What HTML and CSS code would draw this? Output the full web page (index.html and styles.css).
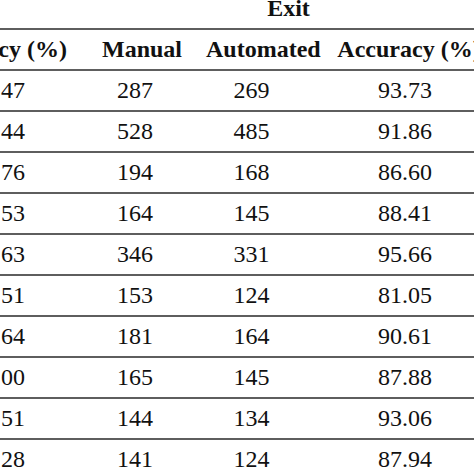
FILE: index.html
```html
<!DOCTYPE html>
<html lang="en">
<head>
<meta charset="utf-8">
<link rel="stylesheet" href="styles.css">
</head>
<body>
<div class="frame">
  <table class="results">
    <colgroup>
      <col class="c-prev">
      <col class="c-manual">
      <col class="c-auto">
      <col class="c-acc">
    </colgroup>
    <thead>
      <tr class="group-row">
        <th></th>
        <th colspan="3" class="group">Exit</th>
      </tr>
      <tr class="head-row">
        <th class="prev-head"><div class="clip-right">Accuracy (%)</div></th>
        <th class="head">Manual</th>
        <th class="head">Automated</th>
        <th class="head head-acc">Accuracy (%)</th>
      </tr>
    </thead>
    <tbody>
      <tr><td class="prev">47</td><td>287</td><td>269</td><td>93.73</td></tr>
      <tr><td class="prev">44</td><td>528</td><td>485</td><td>91.86</td></tr>
      <tr><td class="prev">76</td><td>194</td><td>168</td><td>86.60</td></tr>
      <tr><td class="prev">53</td><td>164</td><td>145</td><td>88.41</td></tr>
      <tr><td class="prev">63</td><td>346</td><td>331</td><td>95.66</td></tr>
      <tr><td class="prev">51</td><td>153</td><td>124</td><td>81.05</td></tr>
      <tr><td class="prev">64</td><td>181</td><td>164</td><td>90.61</td></tr>
      <tr><td class="prev">00</td><td>165</td><td>145</td><td>87.88</td></tr>
      <tr><td class="prev">51</td><td>144</td><td>134</td><td>93.06</td></tr>
      <tr><td class="prev">28</td><td>141</td><td>124</td><td>87.94</td></tr>
    </tbody>
  </table>
</div>
</body>
</html>
```

FILE: styles.css
```css
html, body {
  margin: 0;
  padding: 0;
  background: #ffffff;
}

.frame {
  width: 474px;
  height: 474px;
  overflow: hidden;
  background: #ffffff;
}

.results {
  margin-top: -11px;
  table-layout: fixed;
  width: 499px;
  border-collapse: separate;
  border-spacing: 0;
  font-family: "Liberation Serif", "Times New Roman", serif;
  font-size: 24px;
  color: #111111;
}

.c-prev { width: 78px; }
.c-manual { width: 114px; }
.c-auto { width: 119px; }
.c-acc { width: 188px; }

.results th,
.results td {
  padding: 0;
  height: 39px;
  line-height: 39px;
  text-align: center;
  white-space: nowrap;
  border-bottom: 2px solid #5e5e5e;
  vertical-align: middle;
}

.results th {
  font-weight: bold;
}

.results .head {
  padding-left: 14px;
}

.results .head-acc {
  padding-left: 8px;
}

.results .prev {
  text-align: left;
  padding-left: 1px;
}

.clip-right {
  display: flex;
  justify-content: flex-end;
  padding-right: 11px;
}
```
